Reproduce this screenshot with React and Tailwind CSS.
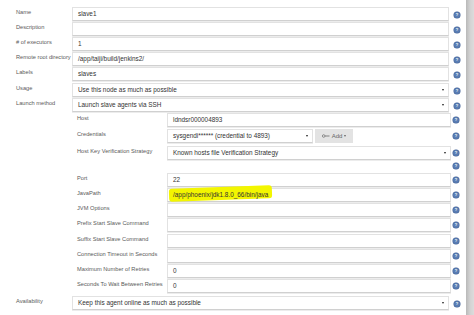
import React from "react";

const Help = () => (
  <span className="flex h-[6px] w-[6px] items-center justify-center rounded-full bg-[#5a7db3] text-[4px] font-bold leading-none text-white shadow-[0_0_0_0.5px_#3f5f94]">
    ?
  </span>
);

const Arrow = () => (
  <span className="ml-auto mr-[4px] h-0 w-0 border-l-[1.5px] border-r-[1.5px] border-t-[2.5px] border-l-transparent border-r-transparent border-t-[#222]" />
);

const Box = ({ children, select, className = "" }) => (
  <div
    className={`flex h-[14px] items-center border border-[#e2e2e2] border-b-[#d0d0d0] bg-white pl-[5px] text-[6.4px] text-[#333] shadow-[0_1px_0_#ececec] ${className}`}
  >
    <span className="whitespace-nowrap">{children}</span>
    {select && <Arrow />}
  </div>
);

const TopRow = ({ label, value, select, mt = "mt-px" }) => (
  <div className={`flex h-[14px] items-start ${mt}`}>
    <div className="w-[56px] whitespace-nowrap pt-[1px] text-[5.7px] leading-[8px] text-[#5a5a5a]">{label}</div>
    <Box select={select} className="w-[377px]">
      {value}
    </Box>
    <div className="flex w-[16px] items-center justify-center pt-[5px]">
      <Help />
    </div>
  </div>
);

const SubRow = ({ label, value, mt = "mt-px", children }) => (
  <div className={`flex h-[14px] items-start ${mt}`}>
    <div className="w-[90px] whitespace-nowrap pt-[1px] text-[5.7px] leading-[8px] text-[#5a5a5a]">{label}</div>
    {children ? children : <Box className="w-[284px]">{value}</Box>}
    <div className="flex w-[10px] items-center justify-center pt-[4px]">
      <Help />
    </div>
  </div>
);

export default function App() {
  return (
    <div
      className="relative flex h-[315px] w-[474px] overflow-hidden bg-white"
      style={{ fontFamily: '"Liberation Sans", Arial, sans-serif' }}
    >
      <div className="flex-1 pl-[16px] pt-[7px]">
        <TopRow label="Name" value="slave1" mt="mt-0" />
        <TopRow label="Description" value="" />
        <TopRow label="# of executors" value="1" />
        <TopRow label="Remote root directory" value="/app/taiji/build/jenkins2/" />
        <TopRow label="Labels" value="slaves" />
        <TopRow label="Usage" value="Use this node as much as possible" select mt="mt-[2px]" />
        <TopRow label="Launch method" value="Launch slave agents via SSH" select />

        <div className="ml-[61px]">
          <SubRow label="Host" value="ldndsr000004893" mt="mt-px" />
          <SubRow label="Credentials" mt="mt-[2px]">
            <div className="flex w-[284px] items-center">
              <Box select className="w-[146px]">
                sysgendi****** (credential to 4893)
              </Box>
              <div className="ml-[2px] flex h-[14px] w-[38px] items-center justify-center gap-[2px] bg-[#e3e3e3] text-[6px] text-[#666]">
                <svg width="8" height="4" viewBox="0 0 8 4">
                  <circle cx="1.7" cy="2" r="1.3" fill="none" stroke="#777" strokeWidth="0.8" />
                  <line x1="3" y1="2" x2="7.5" y2="2" stroke="#777" strokeWidth="0.9" />
                </svg>
                <span>Add</span>
                <span className="h-0 w-0 border-l-[1.5px] border-r-[1.5px] border-t-[2px] border-l-transparent border-r-transparent border-t-[#666]" />
              </div>
            </div>
          </SubRow>
          <SubRow label="Host Key Verification Strategy" mt="mt-[3px]">
            <Box select className="w-[284px]">
              Known hosts file Verification Strategy
            </Box>
          </SubRow>
          <div className="flex h-[12px] items-center">
            <div className="w-[374px]" />
            <div className="flex w-[10px] justify-center">
              <Help />
            </div>
          </div>
          <SubRow label="Port" value="22" mt="mt-[1px]" />
          <SubRow label="JavaPath" mt="mt-px">
            <Box className="w-[284px]">
              <span className="relative">
                <span className="absolute -left-[4px] -right-[4px] -top-[4px] -bottom-[2px] -rotate-2 rounded-[3px] bg-[#f3f600]" />
                <span className="relative">/app/phoenix/jdk1.8.0_66/bin/java</span>
              </span>
            </Box>
          </SubRow>
          <SubRow label="JVM Options" value="" />
          <SubRow label="Prefix Start Slave Command" value="" />
          <SubRow label="Suffix Start Slave Command" value="" mt="mt-[2px]" />
          <SubRow label="Connection Timeout in Seconds" value="" />
          <SubRow label="Maximum Number of Retries" value="0" />
          <SubRow label="Seconds To Wait Between Retries" value="0" />
        </div>

        <TopRow label="Availability" value="Keep this agent online as much as possible" select mt="mt-[3px]" />
      </div>
      <div className="w-[8px] bg-gradient-to-r from-[#b9b9b9] via-[#d2d2d2] to-[#dcdcdc]" />
    </div>
  );
}
